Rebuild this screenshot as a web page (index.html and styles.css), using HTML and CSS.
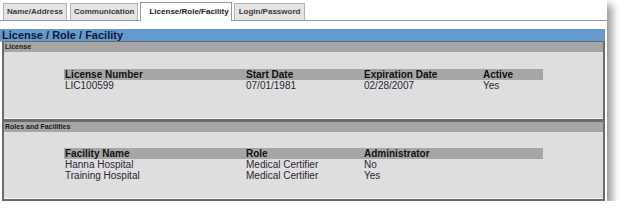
FILE: index.html
```html
<!DOCTYPE html>
<html lang="en">
<head>
    <meta charset="UTF-8">
    <meta name="viewport" content="width=device-width, initial-scale=1.0">
    <link rel="stylesheet" href="styles.css">
    <title>License / Role / Facility</title>
</head>
<body>
    <div id="window">
        <div id="tabs">
            <div class="tab">Name/Address</div>
            <div class="tab">Communication</div>
            <div class="tab active">License/Role/Facility</div>
            <div class="tab">Login/Password</div>
        </div>

        <div id="title">License / Role / Facility</div>

        <div id="frame">
            <div class="section">
                <div class="section-head">License</div>
                <div class="section-body license">
                    <table class="grid">
                        <tr>
                            <th class="c1">License Number</th>
                            <th class="c2">Start Date</th>
                            <th class="c3">Expiration Date</th>
                            <th class="c4">Active</th>
                        </tr>
                        <tr>
                            <td>LIC100599</td>
                            <td>07/01/1981</td>
                            <td>02/28/2007</td>
                            <td>Yes</td>
                        </tr>
                    </table>
                </div>
            </div>

            <div class="section">
                <div class="section-head">Roles and Facilities</div>
                <div class="section-body roles">
                    <table class="grid">
                        <tr>
                            <th class="c1">Facility Name</th>
                            <th class="c2">Role</th>
                            <th class="c34">Administrator</th>
                        </tr>
                        <tr>
                            <td>Hanna Hospital</td>
                            <td>Medical Certifier</td>
                            <td>No</td>
                        </tr>
                        <tr>
                            <td>Training Hospital</td>
                            <td>Medical Certifier</td>
                            <td>Yes</td>
                        </tr>
                    </table>
                </div>
            </div>
        </div>
    </div>
</body>
</html>
```

FILE: styles.css
```css
body {
    margin: 0;
    background-color: #ffffff;
    font-family: "Liberation Sans", Arial, sans-serif;
    color: #111111;
}

#window {
    width: 607px;
    height: 201px;
    background-color: #ffffff;
    box-shadow: 5px 5px 8px rgba(0, 0, 0, 0.42);
}

#tabs {
    display: flex;
    align-items: flex-end;
    height: 20px;
    padding-left: 3px;
    border-bottom: 1px solid #9a9a9a;
}

.tab {
    height: 16px;
    line-height: 16px;
    padding: 0 3px;
    margin-right: 2px;
    font-size: 8px;
    font-weight: bold;
    color: #3a3a3a;
    background-color: #e4e4e4;
    border: 1px solid #b4b4b4;
    border-bottom: none;
}

.tab:first-child {
    margin-right: 3px;
}

.tab:last-child {
    padding: 0 4px;
}

.tab.active {
    height: 18px;
    line-height: 18px;
    padding: 0 2px 0 8px;
    margin-bottom: -1px;
    color: #222222;
    background-color: #ffffff;
    border-color: #9a9a9a;
}

#title {
    width: 603px;
    height: 12px;
    line-height: 12px;
    margin-top: 8px;
    padding-left: 2px;
    font-size: 11px;
    font-weight: bold;
    color: #0c1a38;
    background-color: #6699cc;
    border-bottom: 1px solid #8fb4da;
    box-sizing: content-box;
}

#frame {
    width: 599px;
    margin-left: 2px;
    border: 2px solid #6b6b6b;
    border-top-width: 1px;
    margin-top: -1px;
}

.section + .section {
    border-top: 3px solid #6b6b6b;
}

.section-head {
    height: 10px;
    line-height: 10px;
    padding-left: 1px;
    font-size: 7px;
    font-weight: bold;
    color: #1a1a1a;
    background-color: #a6a6a6;
}

.section-body {
    background-color: #dedede;
    border-bottom: 1px solid #f4f4f4;
}

.section-body.license {
    padding: 17px 0 27px 0;
}

.section-body.roles {
    padding: 16px 0 17px 0;
}

.grid {
    width: 479px;
    margin-left: 60px;
    border-collapse: collapse;
    table-layout: fixed;
}

.grid th,
.grid td {
    height: 11px;
    line-height: 11px;
    padding: 0 1px;
    font-size: 10px;
    text-align: left;
    white-space: nowrap;
}

.grid th {
    font-weight: bold;
    color: #111111;
    background-color: #a6a6a6;
}

.grid td {
    color: #2e2438;
}

.c1 {
    width: 179px;
}

.c2 {
    width: 116px;
}

.c3 {
    width: 117px;
}

.c4 {
    width: 59px;
}

.c34 {
    width: 178px;
}
```
